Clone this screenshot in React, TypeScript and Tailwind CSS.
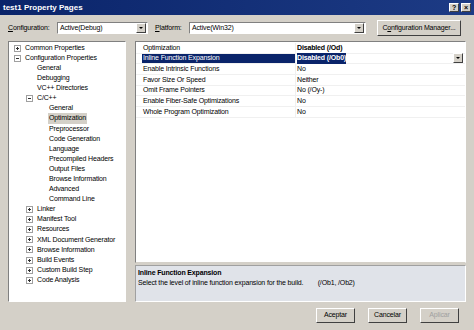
import React from "react";

const font = { fontFamily: '"Liberation Sans", Arial, sans-serif' };

type Node = { label: string; level: number; box?: "plus" | "minus"; selected?: boolean };

const tree: Node[] = [
  { label: "Common Properties", level: 0, box: "plus" },
  { label: "Configuration Properties", level: 0, box: "minus" },
  { label: "General", level: 1 },
  { label: "Debugging", level: 1 },
  { label: "VC++ Directories", level: 1 },
  { label: "C/C++", level: 1, box: "minus" },
  { label: "General", level: 2 },
  { label: "Optimization", level: 2, selected: true },
  { label: "Preprocessor", level: 2 },
  { label: "Code Generation", level: 2 },
  { label: "Language", level: 2 },
  { label: "Precompiled Headers", level: 2 },
  { label: "Output Files", level: 2 },
  { label: "Browse Information", level: 2 },
  { label: "Advanced", level: 2 },
  { label: "Command Line", level: 2 },
  { label: "Linker", level: 1, box: "plus" },
  { label: "Manifest Tool", level: 1, box: "plus" },
  { label: "Resources", level: 1, box: "plus" },
  { label: "XML Document Generator", level: 1, box: "plus" },
  { label: "Browse Information", level: 1, box: "plus" },
  { label: "Build Events", level: 1, box: "plus" },
  { label: "Custom Build Step", level: 1, box: "plus" },
  { label: "Code Analysis", level: 1, box: "plus" },
];

const props: [string, string, boolean?][] = [
  ["Optimization", "Disabled (/Od)", true],
  ["Inline Function Expansion", "Disabled (/Ob0)", true],
  ["Enable Intrinsic Functions", "No"],
  ["Favor Size Or Speed", "Neither"],
  ["Omit Frame Pointers", "No (/Oy-)"],
  ["Enable Fiber-Safe Optimizations", "No"],
  ["Whole Program Optimization", "No"],
];

function Expander({ kind }: { kind: "plus" | "minus" }) {
  return (
    <div className="relative w-[7px] h-[7px] border border-[#a0a0a0] bg-white mr-[4px] shrink-0">
      <div className="absolute left-[1px] top-[2px] w-[3px] h-px bg-[#303030]" />
      {kind === "plus" && <div className="absolute left-[2px] top-[1px] w-px h-[3px] bg-[#303030]" />}
    </div>
  );
}

function DropArrow() {
  return (
    <div className="w-[10px] h-[10px] bg-[#d4d0c8] border border-t-white border-l-white border-r-[#404040] border-b-[#404040] flex items-center justify-center shrink-0">
      <div className="w-0 h-0 border-l-[2px] border-r-[2px] border-t-[2px] border-l-transparent border-r-transparent border-t-black" />
    </div>
  );
}

function Combo({ text, w }: { text: string; w: string }) {
  return (
    <div className={`${w} h-[12px] bg-white border border-t-[#808080] border-l-[#808080] border-r-white border-b-white flex items-center justify-between pl-[2px] pr-px`}>
      <span>{text}</span>
      <DropArrow />
    </div>
  );
}

function Button({ label, disabled }: { label: string; disabled?: boolean }) {
  return (
    <div className="w-[39px] h-[15px] bg-[#d4d0c8] border border-t-white border-l-white border-r-[#404040] border-b-[#404040] flex items-center justify-center">
      <span className={disabled ? "text-[#a0a0a0]" : "text-black"}>{label}</span>
    </div>
  );
}

export default function App() {
  return (
    <div className="w-[474px] h-[330px] bg-[#d4d0c8] flex flex-col text-black text-[7px] tracking-[-0.15px] whitespace-nowrap overflow-hidden" style={font}>
      <div className="h-[15px] shrink-0 bg-gradient-to-r from-[#0a246a] to-[#1d3b85] flex items-center justify-between pl-[3px] pr-[3px]">
        <span className="text-white font-bold text-[8px] tracking-normal">test1 Property Pages</span>
        <div className="flex gap-[2px]">
          <div className="w-[10px] h-[9px] bg-[#d4d0c8] border border-t-white border-l-white border-r-[#404040] border-b-[#404040] flex items-center justify-center text-[7px] font-bold leading-none">?</div>
          <div className="w-[10px] h-[9px] bg-[#d4d0c8] border border-t-white border-l-white border-r-[#404040] border-b-[#404040] flex items-center justify-center text-[7px] font-bold leading-none">×</div>
        </div>
      </div>

      <div className="h-[26px] shrink-0 flex items-center pl-[8px]">
        <span className="w-[49px]"><u>C</u>onfiguration:</span>
        <Combo text="Active(Debug)" w="w-[91px]" />
        <span className="ml-[7px] w-[34px]"><u>P</u>latform:</span>
        <Combo text="Active(Win32)" w="w-[177px]" />
        <div className="ml-[11px] w-[84px] h-[16px] bg-[#d4d0c8] border border-t-white border-l-white border-r-[#404040] border-b-[#404040] flex items-center justify-center">
          <span>C<u>o</u>nfiguration Manager...</span>
        </div>
      </div>

      <div className="flex px-[8px] gap-[9px] h-[261px] shrink-0">
        <div className="w-[118px] bg-white border border-t-[#808080] border-l-[#808080] border-r-white border-b-white pt-[1px]">
          {tree.map((n, i) => (
            <div key={i} className="h-[10.1px] flex items-center" style={{ paddingLeft: n.level === 0 ? 5 : n.level === 1 ? (n.box ? 17 : 28) : 40 }}>
              {n.box && <Expander kind={n.box} />}
              <span className={n.selected ? "bg-[#d4d0c8] px-px -mx-px" : ""}>{n.label}</span>
            </div>
          ))}
        </div>

        <div className="flex-1 flex flex-col gap-[2px]">
          <div className="h-[222px] bg-white border border-t-[#808080] border-l-[#808080] border-r-white border-b-[#d4d0c8] pt-[1px]">
            {props.map(([name, value, bold], i) => (
              <div key={i} className="h-[10.67px] flex border-b border-[#f0f0f0]">
                <div className="w-[6px] shrink-0" />
                <div className={`w-[153px] shrink-0 flex items-center pl-px ${i === 1 ? "bg-[#0a246a] text-white" : ""}`}>{name}</div>
                <div className="flex-1 flex items-center justify-between pl-px pr-[2px] border-l border-[#f0f0f0]">
                  {i === 1 ? (
                    <span className="font-bold bg-[#0a246a] text-white">{value}</span>
                  ) : (
                    <span className={bold ? "font-bold" : ""}>{value}</span>
                  )}
                  {i === 1 && <DropArrow />}
                </div>
              </div>
            ))}
          </div>
          <div className="h-[37px] bg-[#e0e3e9] border border-t-[#a0a0a0] border-l-[#a0a0a0] border-r-white border-b-white px-[2px] pt-[2px] leading-[10px]">
            <div className="font-bold">Inline Function Expansion</div>
            <div>Select the level of inline function expansion for the build.&nbsp;&nbsp;&nbsp;&nbsp;&nbsp;&nbsp;&nbsp;&nbsp;(/Ob1, /Ob2)</div>
          </div>
        </div>
      </div>

      <div className="flex-1 flex items-center justify-end gap-[13px] pr-[15px] pb-[2px]">
        <Button label="Aceptar" />
        <Button label="Cancelar" />
        <Button label="Aplicar" disabled />
      </div>
    </div>
  );
}
